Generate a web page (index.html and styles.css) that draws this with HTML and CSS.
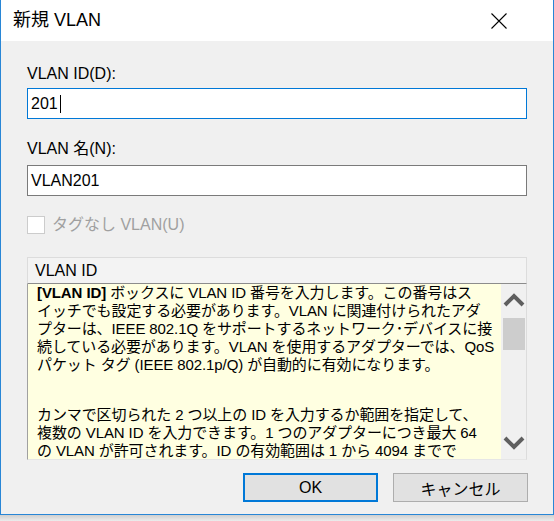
FILE: index.html
```html
<!DOCTYPE html>
<html lang="ja">

<head>
    <title>新規 VLAN</title>
    <meta charset="UTF-8">
    <link rel="stylesheet" href="styles.css">
</head>

<body>

    <div class="window">
        <div class="titlebar">
            <span class="title">新規 VLAN</span>
            <svg class="close" width="16" height="16" viewBox="0 0 16 16">
                <path d="M0.5 0.5 L15.5 15.5 M15.5 0.5 L0.5 15.5" stroke="#000" stroke-width="1.1" fill="none" />
            </svg>
        </div>
        <div class="dlg-body">
            <div class="field-label">VLAN ID(D):</div>
            <div class="textbox focused">201<span class="caret"></span></div>

            <div class="field-label second">VLAN 名(N):</div>
            <div class="textbox">VLAN201</div>

            <div class="check">
                <span class="check-box"></span>
                <span class="check-text">タグなし VLAN(U)</span>
            </div>

            <div class="help">
                <div class="help-head">VLAN ID</div>
                <div class="help-body">
                    <div class="help-text">
                        <p><b>[VLAN ID]</b> ボックスに VLAN ID 番号を入力します。この番号はス<br>
                            イッチでも設定する必要があります。VLAN に関連付けられたアダ<br>
                            プターは、IEEE 802.1Q をサポートするネットワーク･デバイスに接<br>
                            続している必要があります。VLAN を使用するアダプターでは、QoS<br>
                            パケット タグ (IEEE 802.1p/Q) が自動的に有効になります。</p>
                        <p>カンマで区切られた 2 つ以上の ID を入力するか範囲を指定して、<br>
                            複数の VLAN ID を入力できます。1 つのアダプターにつき最大 64<br>
                            の VLAN が許可されます。ID の有効範囲は 1 から 4094 までで</p>
                    </div>
                    <div class="scrollbar">
                        <div class="arrow">
                            <svg width="22" height="16" viewBox="0 0 22 16">
                                <polyline points="2,13 11,4 20,13" stroke="#5f5f5f" stroke-width="4" fill="none" />
                            </svg>
                        </div>
                        <div class="thumb"></div>
                        <div class="track"></div>
                        <div class="arrow">
                            <svg width="22" height="16" viewBox="0 0 22 16">
                                <polyline points="2,3 11,12 20,3" stroke="#5f5f5f" stroke-width="4" fill="none" />
                            </svg>
                        </div>
                    </div>
                </div>
            </div>

            <div class="buttons">
                <button class="btn default">OK</button>
                <button class="btn">キャンセル</button>
            </div>
        </div>
    </div>
    <div class="shadow"></div>

</body>

</html>
```

FILE: styles.css
```css
body {
    margin: 0;
    background: #f0f0f0;
    font-family: "Liberation Sans", "Noto Sans CJK JP", sans-serif;
    color: #000;
}

.window {
    width: 554px;
    height: 515px;
    box-sizing: border-box;
    border: 1px solid #2886d6;
    border-top: none;
    background: #f0f0f0;
}

.titlebar {
    height: 41px;
    background: #fff;
    display: flex;
    align-items: center;
    justify-content: space-between;
    padding: 0 46px 0 12px;
}

.title {
    font-size: 18px;
    line-height: 41px;
}

.close {
    display: block;
    margin-top: 1px;
}

.dlg-body {
    padding: 23px 26px 0 26px;
}

.field-label {
    font-size: 16px;
    line-height: 20px;
    margin-bottom: 4px;
}

.field-label.second {
    margin-top: 20px;
    margin-bottom: 6px;
}

.textbox {
    height: 31px;
    box-sizing: border-box;
    border: 1px solid #7a7a7a;
    background: #fff;
    font-size: 16px;
    line-height: 29px;
    padding-left: 3px;
    display: flex;
    align-items: center;
}

.textbox.focused {
    border-color: #0078d7;
}

.caret {
    display: inline-block;
    width: 1px;
    height: 18px;
    background: #000;
    margin-left: 2px;
}

.check {
    margin-top: 20px;
    height: 18px;
    display: flex;
    align-items: center;
}

.check-box {
    width: 18px;
    height: 18px;
    box-sizing: border-box;
    border: 1px solid #cccccc;
    background: #fff;
}

.check-text {
    margin-left: 7px;
    font-size: 16px;
    line-height: 18px;
    color: #a0a0a0;
}

.help {
    margin-top: 23px;
}

.help-head {
    height: 27px;
    box-sizing: border-box;
    border: 1px solid #dcdcdc;
    border-bottom: 1px solid #8c8c8c;
    background: #f3f3f3;
    font-size: 16px;
    line-height: 25px;
    padding-left: 7px;
}

.help-body {
    height: 176px;
    box-sizing: border-box;
    display: flex;
    border-left: 1px solid #a0a0a0;
    border-right: 1px solid #dcdcdc;
    border-bottom: 1px solid #e6e6e6;
}

.help-text {
    flex: 1;
    background: #ffffe1;
    overflow: hidden;
    padding-left: 9px;
    font-size: 15px;
    line-height: 18px;
    white-space: nowrap;
    letter-spacing: -0.1px;
}

.help-text p {
    margin: 0;
}

.help-text p + p {
    margin-top: 32px;
}

.scrollbar {
    width: 25px;
    background: #f0f0f0;
    display: flex;
    flex-direction: column;
}

.arrow {
    height: 32px;
    display: flex;
    align-items: center;
    justify-content: center;
}

.thumb {
    height: 32px;
    margin: 2px 1px 0 2px;
    background: #cdcdcd;
}

.track {
    flex: 1;
}

.buttons {
    margin-top: 13px;
    display: flex;
    justify-content: flex-end;
    gap: 15px;
    margin-right: -1px;
}

.btn {
    width: 135px;
    height: 29px;
    box-sizing: border-box;
    border: 1px solid #adadad;
    background: #e1e1e1;
    font-family: "Liberation Sans", "Noto Sans CJK JP", sans-serif;
    font-size: 16px;
    color: #000;
    padding: 0;
}

.btn.default {
    border: 2px solid #0078d7;
}

.shadow {
    height: 6px;
    background: linear-gradient(#cfcfcf, #ececec);
}
```
